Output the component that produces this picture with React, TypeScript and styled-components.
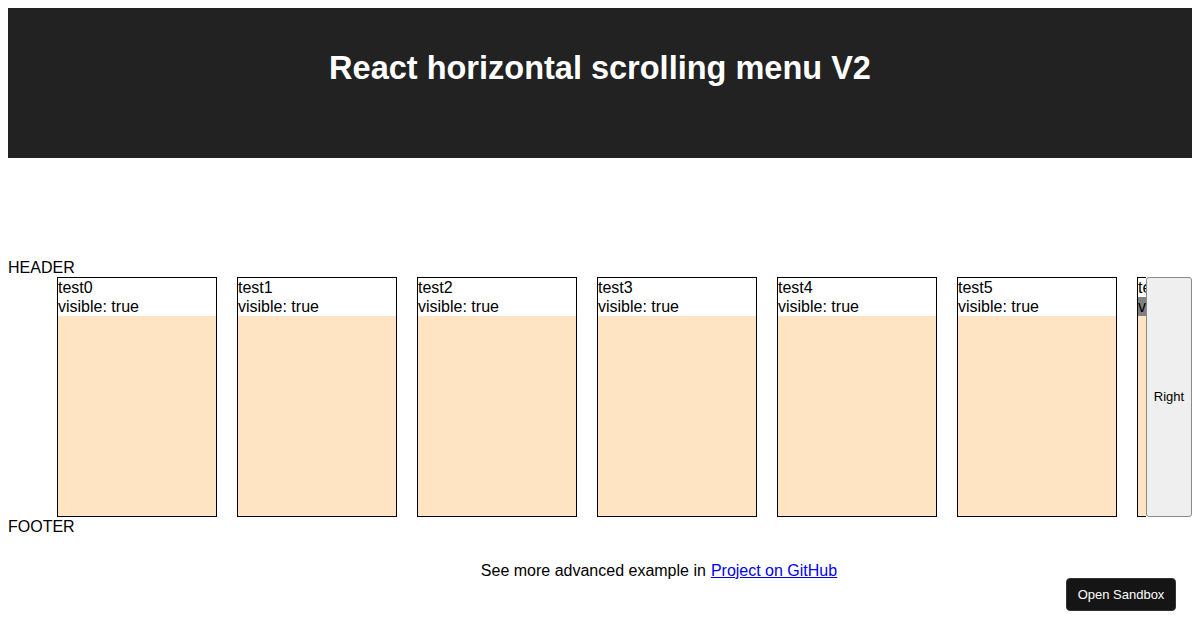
import React from "react";
import styled, { createGlobalStyle } from "styled-components";

const Global = createGlobalStyle`
  html, body { margin: 0; padding: 0; background: #fff; }
  body { margin: 8px; font-family: "Liberation Sans", Arial, sans-serif; font-size: 16px; color: #000; }
`;

const Banner = styled.header`
  height: 150px;
  background: #222222;
  display: flex;
  justify-content: center;
  align-items: flex-start;
  padding-top: 42px;
  box-sizing: border-box;
`;

const Title = styled.h1`
  margin: 0;
  color: #fff;
  font-size: 32.5px;
  font-weight: bold;
  line-height: 37px;
`;

const Main = styled.main`
  padding-top: 100px;
  line-height: 19px;
`;

const Label = styled.div`
  height: 19px;
`;

const MenuRow = styled.div`
  display: flex;
  height: 240px;
`;

const ArrowSlot = styled.div<{ $w: number }>`
  flex: 0 0 ${(p) => p.$w}px;
  display: flex;
`;

const ArrowButton = styled.button<{ $hidden?: boolean }>`
  flex: 1;
  visibility: ${(p) => (p.$hidden ? "hidden" : "visible")};
  background: #efefef;
  border: 1px solid #8a8a8a;
  border-radius: 3px;
  font-family: "Liberation Sans", Arial, sans-serif;
  font-size: 13px;
  color: #000;
  padding: 0 0 2px 0;
`;

const Scroller = styled.div`
  flex: 1;
  overflow: hidden;
  display: flex;
  gap: 20px;
`;

const Card = styled.div`
  flex: 0 0 160px;
  box-sizing: border-box;
  border: 1px solid #000;
  background: #ffe4c4;
  display: flex;
  flex-direction: column;
`;

const CardHead = styled.div`
  background: #fff;
`;

const Line = styled.div<{ $dim?: boolean }>`
  height: 19px;
  white-space: nowrap;
  background: ${(p) => (p.$dim ? "#808080" : "transparent")};
`;

const Note = styled.p`
  margin: 25px 0 0 0;
  display: flex;
  justify-content: center;
  padding-left: 118px;
  gap: 5px;
  line-height: 19px;
`;

const Link = styled.a`
  color: #0000ee;
  text-decoration: underline;
`;

const SandboxButton = styled.button`
  position: fixed;
  right: 24px;
  bottom: 19px;
  width: 110px;
  height: 33px;
  background: #151515;
  color: #fff;
  border: 1px solid #333;
  border-radius: 4px;
  font-family: "Liberation Sans", Arial, sans-serif;
  font-size: 13px;
  padding: 0;
`;

const items = Array.from({ length: 7 }, (_, i) => i);

export default function App() {
  return (
    <>
      <Global />
      <Banner>
        <Title>React horizontal scrolling menu V2</Title>
      </Banner>
      <Main>
        <Label>HEADER</Label>
        <MenuRow>
          <ArrowSlot $w={49}>
            <ArrowButton $hidden>Left</ArrowButton>
          </ArrowSlot>
          <Scroller>
            {items.map((i) => (
              <Card key={i}>
                <CardHead>
                  <Line>test{i}</Line>
                  <Line $dim={i >= 6}>visible: true</Line>
                </CardHead>
              </Card>
            ))}
          </Scroller>
          <ArrowSlot $w={46}>
            <ArrowButton>Right</ArrowButton>
          </ArrowSlot>
        </MenuRow>
        <Label>FOOTER</Label>
        <Note>
          <span>See more advanced example in</span>
          <Link href="#">Project on GitHub</Link>
        </Note>
      </Main>
      <SandboxButton>Open Sandbox</SandboxButton>
    </>
  );
}
